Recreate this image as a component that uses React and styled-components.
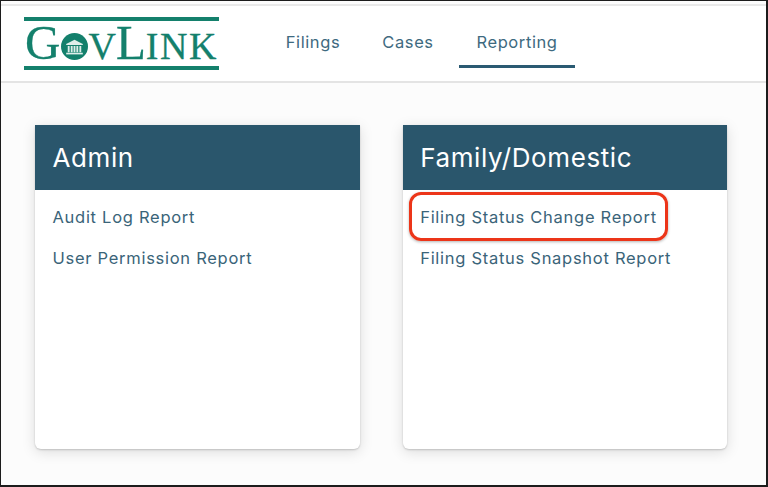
import React from "react";
import styled, { createGlobalStyle } from "styled-components";

const Global = createGlobalStyle`
  html, body { margin: 0; padding: 0; background: #fff; }
  #root { width: 768px; height: 487px; }
  * { box-sizing: border-box; }
`;

const Frame = styled.div`
  width: 768px;
  height: 487px;
  display: flex;
  flex-direction: column;
  overflow: hidden;
  border-style: solid;
  border-color: #1c1c1c;
  border-width: 1px 2px 2px 1px;
  background: #fcfcfc;
  font-family: "Inter", "Noto Sans", sans-serif;
`;

const TopBar = styled.header`
  height: 79px;
  flex: none;
  display: flex;
  align-items: stretch;
  padding-left: 23px;
  background: #fff;
  border-top: 2px solid #e9e9e9;
  margin-top: 3px;
  border-bottom: 2px solid #e4e4e4;
`;

const Logo = styled.div`
  width: 195px;
  height: 53px;
  flex: none;
  margin-top: 11px;
  display: flex;
  flex-direction: column;
  justify-content: space-between;
  border-top: 4px solid #14806c;
  border-bottom: 4px solid #14806c;
`;

const LogoWord = styled.div`
  display: flex;
  align-items: baseline;
  justify-content: center;
  height: 100%;
  padding-top: 2px;
  color: #14806c;
  font-family: "Liberation Serif", serif;
  line-height: 40px;
  white-space: nowrap;
  -webkit-text-stroke: 0.3px #14806c;
`;

const Big = styled.span`
  font-size: ${(p) => p.$size || 49}px;
  line-height: 40px;
  margin-right: ${(p) => p.$mr || 0}px;
`;

const Small = styled.span`
  font-size: ${(p) => p.$size || 38}px;
  line-height: 40px;
  letter-spacing: ${(p) => p.$track || 0}px;
`;

const Seal = styled.svg`
  width: 27px;
  height: 27px;
  align-self: flex-end;
  margin: 0 0 6px 0;
  flex: none;
`;

const Nav = styled.nav`
  display: flex;
  flex: none;
  margin-left: 52px;
  height: 100%;
`;

const NavItem = styled.a`
  display: flex;
  align-items: center;
  justify-content: center;
  width: ${(p) => p.$w}px;
  margin-left: ${(p) => p.$ml || 0}px;
  padding-top: 13px;
  color: #3e6a80;
  font-size: 16.5px;
  letter-spacing: 0.6px;
  border-bottom: 3px solid ${(p) => (p.$active ? "#2a5a72" : "transparent")};
  height: 62px;
`;

const Content = styled.main`
  flex: 1;
  display: flex;
  gap: 43.2px;
  padding: 42px 0 0 34px;
  position: relative;
`;

const Card = styled.section`
  width: 324.5px;
  height: 324px;
  background: #fff;
  border-radius: 0 0 6px 6px;
  box-shadow: 0 1px 2px rgba(0, 0, 0, 0.18), 0 3px 14px rgba(0, 0, 0, 0.13);
`;

const CardHead = styled.h2`
  margin: 0;
  height: 65px;
  display: flex;
  align-items: center;
  padding-left: 17.5px;
  background: #2a566c;
  color: #fff;
  font-size: 26px;
  font-weight: 400;
  letter-spacing: 0.6px;
`;

const CardBody = styled.div`
  display: flex;
  flex-direction: column;
  gap: 21px;
  padding: 17px 17.5px 0;
`;

const ReportLink = styled.a`
  color: #3a6479;
  font-size: 16.5px;
  line-height: 20px;
  letter-spacing: 0.72px;
  white-space: nowrap;
`;

const Callout = styled.div`
  position: absolute;
  left: 408px;
  top: 109px;
  width: 259px;
  height: 49px;
  border: 3px solid #ec3519;
  border-radius: 12px;
  box-shadow: 0 1px 3px rgba(0, 0, 0, 0.3);
  pointer-events: none;
`;

const SealIcon = () => (
  <Seal viewBox="0 0 26 26">
    <circle cx="13" cy="13" r="13" fill="#14806c" />
    <path d="M5 10.5 13 6.5l8 4v1H5z" fill="#dfeeea" />
    <path d="M6.5 12.5h1.8v6H6.5zM9.4 12.5h1.8v6H9.4zM12.1 12.5h1.8v6h-1.8zM14.8 12.5h1.8v6h-1.8zM17.7 12.5h1.8v6h-1.8z" fill="#dfeeea" />
    <path d="M5 19h16v1.6H5z" fill="#dfeeea" />
  </Seal>
);

export default function App() {
  return (
    <>
      <Global />
      <Frame>
        <TopBar>
          <Logo>
            <LogoWord>
              <Big $mr={1}>G</Big>
              <SealIcon />
              <Small>V</Small>
              <Big>L</Big>
              <Small $track={1.5}>INK</Small>
            </LogoWord>
          </Logo>
          <Nav>
            <NavItem $w={84}>Filings</NavItem>
            <NavItem $w={88} $ml={9}>Cases</NavItem>
            <NavItem $w={116} $ml={7} $active>Reporting</NavItem>
          </Nav>
        </TopBar>
        <Content>
          <Card>
            <CardHead>Admin</CardHead>
            <CardBody>
              <ReportLink>Audit Log Report</ReportLink>
              <ReportLink>User Permission Report</ReportLink>
            </CardBody>
          </Card>
          <Card>
            <CardHead>Family/Domestic</CardHead>
            <CardBody>
              <ReportLink>Filing Status Change Report</ReportLink>
              <ReportLink>Filing Status Snapshot Report</ReportLink>
            </CardBody>
          </Card>
          <Callout />
        </Content>
      </Frame>
    </>
  );
}
